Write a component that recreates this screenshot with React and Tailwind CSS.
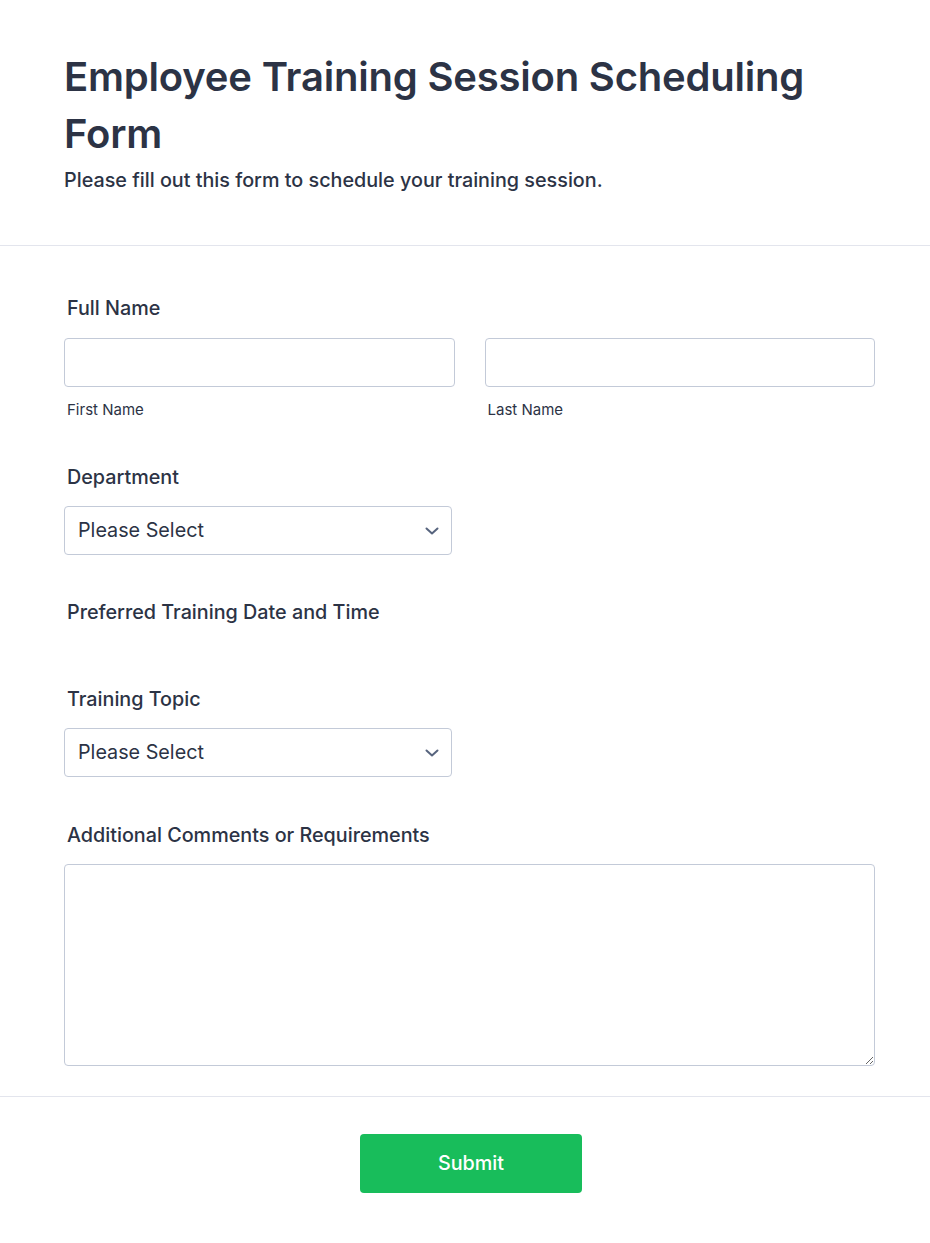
import React from 'react'

const Label = ({ children }) => (
    <label className="block text-[19.75px] leading-[28px] font-medium text-[#2c3345] pl-[3px]">
        {children}
    </label>
)

const Chevron = () => (
    <svg width="14" height="8" viewBox="0 0 14 8" className="absolute right-[13px] top-1/2 -translate-y-1/2 pointer-events-none">
        <path d="M1.5 1.5 L7 6.5 L12.5 1.5" fill="none" stroke="#57647e" strokeWidth="2" strokeLinecap="round" strokeLinejoin="round" />
    </svg>
)

const SelectBox = () => (
    <div className="relative w-[388px] mt-[15px]">
        <div className="h-[49px] border border-[#c3cad8] rounded-[4px] bg-white flex items-center px-[13px] text-[19.75px] text-[#2c3345]">
            Please Select
        </div>
        <Chevron />
    </div>
)

const App = () => {
    return (
        <div className="min-h-[1243px] bg-white text-[#2c3345]" style={{ fontFamily: 'Inter, "Noto Sans", sans-serif' }}>
            <div className="px-[64px] pt-[48px] pb-[51px] border-b border-[#e3e5ed]">
                <h1 className="text-[40px] leading-[57px] font-semibold tracking-[-0.2px] text-[#2c3345]">
                    Employee Training Session Scheduling Form
                </h1>
                <p className="mt-[4px] text-[19.75px] leading-[28px] font-medium text-[#2c3345]">
                    Please fill out this form to schedule your training session.
                </p>
            </div>

            <div className="px-[64px] pt-[48px] pb-[30px] border-b border-[#e3e5ed]">
                <Label>Full Name</Label>
                <div className="grid grid-cols-2 gap-[30px] mt-[16px] w-[811px]">
                    <div>
                        <div className="h-[49px] border border-[#c3cad8] rounded-[4px]" />
                        <div className="mt-[13px] pl-[3px] text-[15px] leading-[20px] text-[#2c3345]">First Name</div>
                    </div>
                    <div>
                        <div className="h-[49px] border border-[#c3cad8] rounded-[4px]" />
                        <div className="mt-[13px] pl-[3px] text-[15px] leading-[20px] text-[#2c3345]">Last Name</div>
                    </div>
                </div>

                <div className="mt-[43px]">
                    <Label>Department</Label>
                    <SelectBox />
                </div>

                <div className="mt-[43px]">
                    <Label>Preferred Training Date and Time</Label>
                </div>

                <div className="mt-[59px]">
                    <Label>Training Topic</Label>
                    <SelectBox />
                </div>

                <div className="mt-[44px]">
                    <Label>Additional Comments or Requirements</Label>
                    <textarea className="block mt-[15px] w-[811px] h-[202px] border border-[#c3cad8] rounded-[4px] resize-y outline-none" />
                </div>
            </div>

            <div className="flex justify-center pt-[37px] pl-[12px]">
                <button className="w-[222px] h-[59px] bg-[#18bd5b] rounded-[4px] text-white text-[19.75px] font-medium">
                    Submit
                </button>
            </div>
        </div>
    )
}

export default App
